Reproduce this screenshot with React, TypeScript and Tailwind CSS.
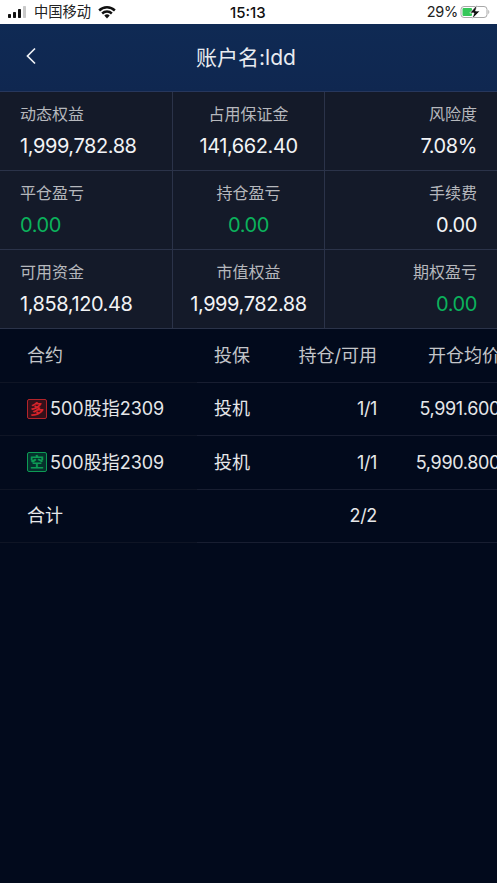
const font = { fontFamily: '"Inter", "Noto Sans CJK SC", sans-serif' };

function Signal() {
  return (
    <svg width="20" height="14" viewBox="0 0 20 14" className="block">
      <rect x="0" y="9" width="3" height="4" rx="0.7" fill="#111" />
      <rect x="5" y="7" width="3" height="6" rx="0.7" fill="#111" />
      <rect x="10" y="4" width="3" height="9" rx="0.7" fill="#111" />
      <rect x="15" y="1" width="3" height="12" rx="0.7" fill="#c9c9c9" />
    </svg>
  );
}

function Wifi() {
  return (
    <svg width="18" height="14" viewBox="0 0 18 14" className="block">
      <path d="M0.3 4.6 A12.4 12.4 0 0 1 17.7 4.6 L16 6.4 A10 10 0 0 0 2 6.4 Z" fill="#111" />
      <path d="M3.3 7.6 A8.2 8.2 0 0 1 14.7 7.6 L13 9.4 A5.8 5.8 0 0 0 5 9.4 Z" fill="#111" />
      <path d="M6.3 10.6 A4 4 0 0 1 11.7 10.6 L9 13.4 Z" fill="#111" />
    </svg>
  );
}

function Battery() {
  return (
    <svg width="31" height="16" viewBox="0 0 31 16" className="block">
      <rect x="1" y="2.5" width="26" height="11" rx="3" fill="none" stroke="#a8a8a8" />
      <rect x="2.5" y="4" width="9.5" height="8" rx="1" fill="#35c759" />
      <path d="M28.3 6 C29.6 6.4 29.6 9.6 28.3 10 Z" fill="#a8a8a8" />
      <path d="M17.2 0.8 L9.8 9 H14 L12 15.2 L20 7 H15.6 Z" fill="#111" stroke="#fff" strokeWidth="0.7" />
    </svg>
  );
}

type Cell = { label: string; value: string; green?: boolean };

const rows: Cell[][] = [
  [
    { label: "动态权益", value: "1,999,782.88" },
    { label: "占用保证金", value: "141,662.40" },
    { label: "风险度", value: "7.08%" },
  ],
  [
    { label: "平仓盈亏", value: "0.00", green: true },
    { label: "持仓盈亏", value: "0.00", green: true },
    { label: "手续费", value: "0.00" },
  ],
  [
    { label: "可用资金", value: "1,858,120.48" },
    { label: "市值权益", value: "1,999,782.88" },
    { label: "期权盈亏", value: "0.00", green: true },
  ],
];

const align = ["items-start pl-5", "items-center", "items-end pr-5"];
const widths = ["w-[173px]", "w-[152px]", "flex-1"];

function Tag({ kind }: { kind: "多" | "空" }) {
  const cls =
    kind === "多"
      ? "border-[#b3242a] bg-[#34101a] text-[#d8242a]"
      : "border-[#0d9a55] bg-[#05302c] text-[#0d9a55]";
  return (
    <span
      className={`flex h-5 w-5 shrink-0 items-center justify-center rounded-[2px] border text-[14px] font-bold leading-none ${cls}`}
    >
      {kind}
    </span>
  );
}

function TableRow({
  first,
  hedge,
  qty,
  price,
  header,
}: {
  first: React.ReactNode;
  hedge?: string;
  qty: string;
  price?: string;
  header?: boolean;
}) {
  const color = header ? "text-[#c3c5c9]" : "text-[#e6e7e9]";
  const num = header ? "" : "tracking-[-0.35px]";
  return (
    <div className={`flex h-[53.5px] text-[18px] ${color}`}>
      <div className="flex w-[197px] shrink-0 items-center gap-[3px] border-b border-[#0f1525] pl-[27px]">{first}</div>
      <div className="flex flex-1 items-center border-b border-[#181e31]">
        <div className="w-[60px] shrink-0 pl-[17px]">{hedge}</div>
        <div className={`w-[120px] shrink-0 whitespace-nowrap text-right ${num}`}>{qty}</div>
        <div className={`w-[123px] shrink-0 whitespace-nowrap text-right ${num}`}>{price}</div>
      </div>
    </div>
  );
}

export default function App() {
  return (
    <div className="flex h-[883px] w-[497px] flex-col overflow-hidden bg-[#020a1c]" style={font}>
      <div className="flex h-6 shrink-0 items-center bg-white pl-[8px] pr-[6px] text-[14.25px] text-[#222]">
        <Signal />
        <span className="ml-[6px] leading-none">中国移动</span>
        <span className="ml-[7px]">
          <Wifi />
        </span>
        <span className="ml-[114px] text-[15px] font-medium leading-none text-[#111]">15:13</span>
        <span className="ml-auto mr-[2px] text-[14.5px] tracking-[-0.3px] leading-none">29%</span>
        <Battery />
      </div>

      <div className="relative flex h-[68px] shrink-0 items-center justify-center border-b border-[#27375c] bg-gradient-to-b from-[#0f2a54] to-[#0f2750] text-[21px] text-[#e8ebf0]">
        <svg width="12" height="18" viewBox="0 0 12 18" className="absolute left-[25px] top-[23px]">
          <path d="M10 1.5 L2.5 9 L10 16.5" fill="none" stroke="#eef1f5" strokeWidth="1.7" />
        </svg>
        <span className="mr-[5px]">账户名:ldd</span>
      </div>

      <div className="shrink-0 bg-[#141a29]">
        {rows.map((row, i) => (
          <div key={i} className="flex h-[79px] border-b border-[#2b3349]">
            {row.map((cell, j) => (
              <div
                key={j}
                className={`flex flex-col justify-center gap-[8px] pb-[2px] ${widths[j]} ${align[j]} ${
                  j < 2 ? "border-r border-[#2b3349]" : ""
                }`}
              >
                <span className="text-[16px] leading-[24px] text-[#b6b8bd]">{cell.label}</span>
                <span
                  className={`text-[20px] leading-[24px] tracking-[-0.42px] ${
                    cell.green ? "text-[#0bb25c]" : "text-[#f2f3f5]"
                  }`}
                >
                  {cell.value}
                </span>
              </div>
            ))}
          </div>
        ))}
      </div>

      <div className="overflow-hidden">
        <TableRow header first="合约" hedge="投保" qty="持仓/可用" price="开仓均价" />
        <TableRow
          first={
            <>
              <Tag kind="多" />
              <span>500股指2309</span>
            </>
          }
          hedge="投机"
          qty="1/1"
          price="5,991.600"
        />
        <TableRow
          first={
            <>
              <Tag kind="空" />
              <span>500股指2309</span>
            </>
          }
          hedge="投机"
          qty="1/1"
          price="5,990.800"
        />
        <TableRow first="合计" qty="2/2" />
      </div>
    </div>
  );
}
